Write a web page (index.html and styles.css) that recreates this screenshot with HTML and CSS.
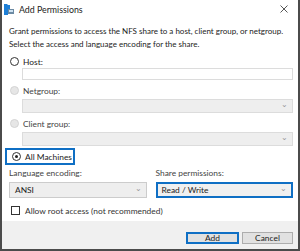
FILE: index.html
```html
<!DOCTYPE html>
<html lang="en">
<head>
  <meta charset="UTF-8" />
  <title>Add Permissions</title>
  <link rel="stylesheet" href="styles.css">
</head>
<body>
  <div class="window">
    <div class="titlebar">
      <svg class="app-icon" width="10" height="11" viewBox="0 0 10 11">
        <path d="M0 0h3l1 1h2v4H4v6H0z" fill="#1e7fd6"/>
        <rect x="4" y="5" width="6" height="5" fill="#6c8aa3"/>
        <rect x="5" y="6" width="4" height="2" fill="#cfe3f3"/>
      </svg>
      <span class="title">Add Permissions</span>
      <svg class="close" width="8" height="8" viewBox="0 0 8 8">
        <path d="M0.5 0.5l7 7M7.5 0.5l-7 7" stroke="#444" stroke-width="0.9"/>
      </svg>
    </div>

    <div class="content">
      <p class="intro">Grant permissions to access the NFS share to a host, client group, or netgroup.<br>Select the access and language encoding for the share.</p>

      <div class="option first">
        <span class="radio"></span><span>Host:</span>
      </div>
      <div class="field host-field"></div>

      <div class="option disabled">
        <span class="radio"></span><span>Netgroup:</span>
      </div>
      <div class="field select-field disabled-field"><span class="caret">&#8964;</span></div>

      <div class="option disabled">
        <span class="radio"></span><span>Client group:</span>
      </div>
      <div class="field select-field disabled-field"><span class="caret">&#8964;</span></div>

      <div class="all-machines">
        <span class="radio checked"></span><span>All Machines</span>
      </div>

      <div class="two-col">
        <div class="col">
          <div class="label">Language encoding:</div>
          <div class="select"><span>ANSI</span><span class="caret">&#8964;</span></div>
        </div>
        <div class="col">
          <div class="label">Share permissions:</div>
          <div class="select focused"><span>Read / Write</span><span class="caret">&#8964;</span></div>
        </div>
      </div>

      <div class="check-row">
        <span class="checkbox"></span><span>Allow root access (not recommended)</span>
      </div>
    </div>

    <div class="footer">
      <button class="btn default">Add</button>
      <button class="btn">Cancel</button>
    </div>
  </div>
</body>
</html>
```

FILE: styles.css
```css
html, body {
  margin: 0;
  padding: 0;
}
body {
  font-family: 'Lato', 'Open Sans', sans-serif;
  font-size: 8.4px;
  color: #222;
  background: #fff;
}
.window {
  width: 300px;
  height: 251px;
  box-sizing: border-box;
  border: 2px solid #4b4b4b;
  border-top: none;
  display: flex;
  flex-direction: column;
  background: #fff;
}
.titlebar {
  height: 18px;
  flex: none;
  display: flex;
  align-items: center;
  padding-left: 2px;
  padding-right: 10px;
}
.app-icon {
  margin-right: 5px;
}
.title {
  font-size: 8.8px;
  color: #222;
  flex: 1;
}
.content {
  padding: 7px 5px 0 7px;
  display: flex;
  flex-direction: column;
  flex: none;
}
.intro {
  margin: 0;
  font-size: 8px;
  line-height: 12.5px;
  height: 25px;
  white-space: nowrap;
}
.option {
  display: flex;
  align-items: center;
  height: 11px;
  margin-top: 5px;
}
.option.first {
  margin-top: 6px;
}
.option.disabled {
  color: #444;
}
.radio {
  width: 9px;
  height: 9px;
  border: 1px solid #333;
  border-radius: 50%;
  box-sizing: border-box;
  margin-right: 4px;
  margin-left: 1px;
  position: relative;
  flex: none;
}
.option.disabled .radio {
  border-color: #d4d4d4;
  background: #e6e6e6;
}
.radio.checked::after {
  content: "";
  position: absolute;
  left: 2px;
  top: 2px;
  width: 3px;
  height: 3px;
  border-radius: 50%;
  background: #222;
}
.field {
  margin-left: 13px;
  border: 1px solid #dcdcdc;
  box-sizing: border-box;
  display: flex;
  align-items: center;
  justify-content: flex-end;
}
.host-field {
  height: 12px;
  margin-top: 1px;
}
.select-field {
  height: 14px;
  margin-top: 3px;
}
.disabled-field {
  background: #eeeeee;
}
.caret {
  font-size: 8px;
  color: #999;
  padding-right: 4px;
  line-height: 1;
  margin-top: -4px;
}
.all-machines {
  display: flex;
  align-items: center;
  align-self: flex-start;
  margin-top: 2px;
  margin-left: -4px;
  height: 17px;
  width: 70px;
  padding-left: 5px;
  border: 2px solid #0f6fc4;
  box-sizing: border-box;
}
.all-machines .radio {
  margin-left: 0;
  margin-right: 4px;
}
.two-col {
  display: flex;
  gap: 9px;
  margin-top: 2px;
}
.col {
  flex: 1;
  display: flex;
  flex-direction: column;
}
.label {
  color: #444;
  height: 12px;
  line-height: 12px;
  margin-bottom: 3px;
}
.select {
  height: 16px;
  border: 1px solid #cccccc;
  background: #eeeeee;
  box-sizing: border-box;
  display: flex;
  align-items: center;
  justify-content: space-between;
  padding-left: 5px;
}
.select.focused {
  border: 2px solid #0f6fc4;
  background: #f0f0f0;
  padding-left: 4px;
}
.check-row {
  display: flex;
  align-items: center;
  margin-top: 7px;
  margin-left: 2px;
  height: 11px;
  color: #333;
}
.checkbox {
  width: 9px;
  height: 9px;
  border: 1px solid #333;
  box-sizing: border-box;
  margin-right: 5px;
  flex: none;
}
.footer {
  flex: 1;
  margin-top: 5px;
  background: #f0f0f0;
  display: flex;
  justify-content: flex-end;
  align-items: flex-start;
  padding: 11px 5px 0 0;
  gap: 3px;
}
.btn {
  font-family: inherit;
  font-size: 8.4px;
  width: 53px;
  height: 12px;
  padding: 0;
  border: 1px solid #adadad;
  background: #e1e1e1;
  color: #222;
  box-sizing: border-box;
  line-height: 1;
}
.btn + .btn {
  width: 51px;
}
.btn.default {
  border: 2px solid #0f6fc4;
}
```
